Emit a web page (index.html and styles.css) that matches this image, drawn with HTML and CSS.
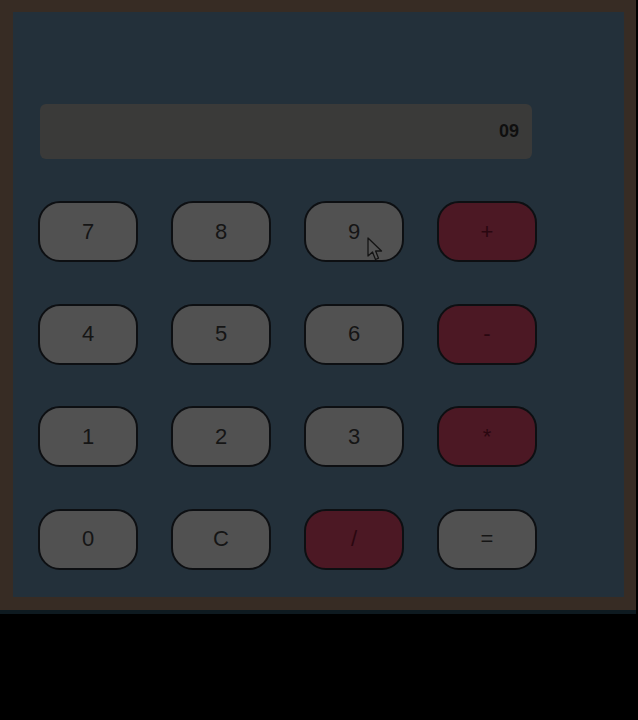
FILE: index.html
```html
<!DOCTYPE html>
<html>
<head>
<meta charset="utf-8">
<link rel="stylesheet" href="styles.css">
</head>
<body>
<div class="frame">
  <div class="panel">
    <div class="display">09</div>
    <div class="keys">
      <div class="key">7</div>
      <div class="key">8</div>
      <div class="key key-hover">9</div>
      <div class="key op">+</div>
      <div class="key">4</div>
      <div class="key">5</div>
      <div class="key">6</div>
      <div class="key op">-</div>
      <div class="key">1</div>
      <div class="key">2</div>
      <div class="key">3</div>
      <div class="key op">*</div>
      <div class="key">0</div>
      <div class="key">C</div>
      <div class="key op">/</div>
      <div class="key">=</div>
    </div>
  </div>
</div>
<div class="edge"></div>
<svg class="cursor" width="18" height="26" viewBox="0 0 18 26">
  <path d="M1 1 L1 19 L5.5 15 L8.5 22.5 L11.5 21.2 L8.6 14 L14.5 14 Z" fill="#545454" stroke="#141414" stroke-width="1.3" stroke-linejoin="round"/>
</svg>
</body>
</html>
```
FILE: styles.css
```css
html, body {
  margin: 0;
  padding: 0;
  background: #000;
}
body {
  width: 638px;
  height: 720px;
  position: relative;
  font-family: "Liberation Sans", Arial, sans-serif;
  overflow: hidden;
}
.frame {
  width: 636px;
  box-sizing: border-box;
  background: #372c24;
  padding: 12px 12px 13px 13px;
}
.panel {
  height: 585px;
  box-sizing: border-box;
  background: #23303a;
  padding: 92px 0 0 25px;
}
.display {
  width: 492px;
  height: 55px;
  box-sizing: border-box;
  margin-left: 2px;
  background: #3a3a39;
  border-radius: 6px;
  display: flex;
  align-items: center;
  justify-content: flex-end;
  padding-right: 13px;
  font-weight: bold;
  font-size: 18px;
  color: #0f0f0f;
}
.keys {
  margin-top: 42px;
  display: grid;
  grid-template-columns: repeat(4, 100px);
  grid-auto-rows: 61px;
  column-gap: 33px;
  row-gap: 41.6px;
}
.key {
  box-sizing: border-box;
  background: #515151;
  border: 2px solid #0d0f12;
  border-radius: 22px;
  display: flex;
  align-items: center;
  justify-content: center;
  font-size: 22px;
  color: #151515;
}
.key.op {
  background: #4c1824;
  color: #2a0710;
}
.edge {
  width: 636px;
  height: 4px;
  background: #0e1a20;
}
.cursor {
  position: absolute;
  left: 367px;
  top: 237px;
}
```
